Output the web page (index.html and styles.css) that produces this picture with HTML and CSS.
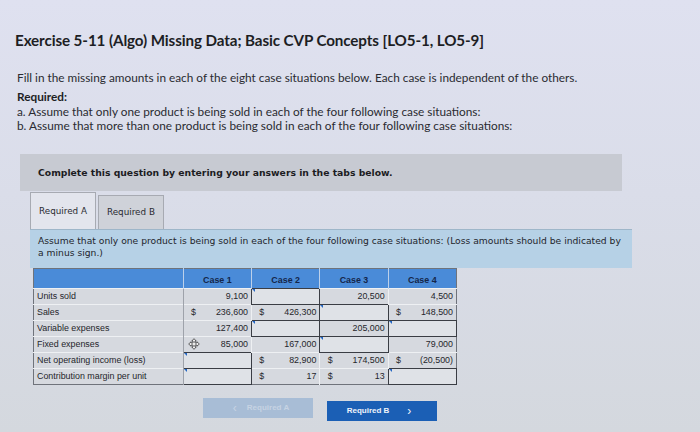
FILE: index.html
```html
<!DOCTYPE html>
<html>
<head>
<meta charset="utf-8">
<title>Exercise 5-11</title>
<link rel="stylesheet" href="styles.css">
</head>
<body>
<div class="page">
  <h1 class="title">Exercise 5-11 (Algo) Missing Data; Basic CVP Concepts [LO5-1, LO5-9]</h1>
  <p class="intro">Fill in the missing amounts in each of the eight case situations below. Each case is independent of the others.</p>
  <div class="req">
    <div class="req-head">Required:</div>
    <div>a. Assume that only one product is being sold in each of the four following case situations:</div>
    <div>b. Assume that more than one product is being sold in each of the four following case situations:</div>
  </div>
  <div class="banner">Complete this question by entering your answers in the tabs below.</div>
  <div class="tabs">
    <div class="tab active">Required A</div>
    <div class="tab">Required B</div>
  </div>
  <div class="panel">
    <div class="instr">Assume that only one product is being sold in each of the four following case situations: (Loss amounts should be indicated by a minus sign.)</div>
  </div>
  <table class="grid">
    <colgroup>
      <col class="c-label">
      <col class="c-dol"><col class="c-val">
      <col class="c-dol"><col class="c-val">
      <col class="c-dol"><col class="c-val">
      <col class="c-dol"><col class="c-val">
    </colgroup>
    <thead>
      <tr>
        <th class="h-label"></th>
        <th colspan="2">Case 1</th>
        <th colspan="2">Case 2</th>
        <th colspan="2">Case 3</th>
        <th colspan="2">Case 4</th>
      </tr>
    </thead>
    <tbody>
      <tr>
        <td class="label">Units sold</td>
        <td class="dol"></td><td class="val">9,100</td>
        <td class="input" colspan="2"></td>
        <td class="dol"></td><td class="val">20,500</td>
        <td class="dol"></td><td class="val">4,500</td>
      </tr>
      <tr>
        <td class="label">Sales</td>
        <td class="dol">$</td><td class="val">236,600</td>
        <td class="dol">$</td><td class="val">426,300</td>
        <td class="input" colspan="2"></td>
        <td class="dol">$</td><td class="val">148,500</td>
      </tr>
      <tr>
        <td class="label">Variable expenses</td>
        <td class="dol"></td><td class="val">127,400</td>
        <td class="input" colspan="2"></td>
        <td class="dol"></td><td class="val">205,000</td>
        <td class="input" colspan="2"></td>
      </tr>
      <tr>
        <td class="label">Fixed expenses</td>
        <td class="dol"><svg class="cursor" viewBox="0 0 14 14" width="12" height="12"><path d="M7 0.8 L9.6 3.6 H8.1 V5.9 H10.4 V4.4 L13.2 7 L10.4 9.6 V8.1 H8.1 V10.4 H9.6 L7 13.2 L4.4 10.4 H5.9 V8.1 H3.6 V9.6 L0.8 7 L3.6 4.4 V5.9 H5.9 V3.6 H4.4 Z" fill="#f4f4f4" stroke="#333" stroke-width="0.9" stroke-linejoin="round"/></svg></td><td class="val">85,000</td>
        <td class="dol"></td><td class="val">167,000</td>
        <td class="input" colspan="2"></td>
        <td class="dol"></td><td class="val">79,000</td>
      </tr>
      <tr>
        <td class="label">Net operating income (loss)</td>
        <td class="input" colspan="2"></td>
        <td class="dol">$</td><td class="val">82,900</td>
        <td class="dol">$</td><td class="val">174,500</td>
        <td class="dol">$</td><td class="val">(20,500)</td>
      </tr>
      <tr>
        <td class="label">Contribution margin per unit</td>
        <td class="input" colspan="2"></td>
        <td class="dol">$</td><td class="val">17</td>
        <td class="dol">$</td><td class="val">13</td>
        <td class="input" colspan="2"></td>
      </tr>
    </tbody>
  </table>
  <div class="nav">
    <div class="btn btn-prev"><span class="chev">&lsaquo;</span> Required A</div>
    <div class="btn btn-next">Required B <span class="chev">&rsaquo;</span></div>
  </div>
</div>
</body>
</html>
```
FILE: styles.css
```css
html, body {
  margin: 0;
  padding: 0;
}
body {
  width: 700px;
  height: 432px;
  overflow: hidden;
  background: linear-gradient(180deg, #dfe1f0 0%, #dadde9 45%, #d4d8de 100%);
  font-family: Lato, "Open Sans", sans-serif;
  color: #1f2026;
}
.page {
  padding: 30px 0 0 15px;
}
.title {
  margin: 0;
  font-family: Lato, sans-serif;
  font-weight: 700;
  font-size: 15.2px;
  line-height: 20px;
  color: #1d1e24;
  letter-spacing: -0.1px;
}
.intro {
  margin: 21px 0 0 2px;
  font-size: 11.8px;
  line-height: 14px;
  color: #2a2b31;
}
.req {
  margin: 5px 0 0 2px;
  font-size: 11.8px;
  line-height: 14.5px;
  color: #2a2b31;
}
.req-head {
  font-weight: 700;
  color: #1d1e24;
}
.banner {
  margin: 20px 0 0 5px;
  width: 602px;
  height: 37px;
  padding-left: 18px;
  box-sizing: border-box;
  display: flex;
  align-items: center;
  background: #c7cad2;
  font-family: "DejaVu Sans", Verdana, sans-serif;
  font-weight: 700;
  font-size: 9.25px;
  color: #1c1c22;
}
.tabs {
  display: flex;
  align-items: flex-end;
  gap: 2px;
  margin: 1px 0 0 15px;
}
.tab {
  height: 34px;
  padding: 0 8px;
  box-sizing: border-box;
  display: flex;
  align-items: center;
  white-space: nowrap;
  border: 1px solid #a7aab2;
  border-bottom: none;
  background: #cfd2d9;
  font-family: "DejaVu Sans", Verdana, sans-serif;
  font-size: 8.8px;
  color: #2a2b31;
}
.tab.active {
  height: 37px;
  background: #e3e5ed;
}
.panel {
  margin-left: 15px;
  width: 602px;
  height: 39px;
  box-sizing: border-box;
  padding: 5px 6px 0 8px;
  background: #b6d1e6;
  border-top: 1px solid #9eb6c9;
}
.instr {
  font-family: "DejaVu Sans", Verdana, sans-serif;
  font-size: 9.2px;
  line-height: 12px;
  color: #23252c;
  width: 584px;
}
.grid {
  margin-left: 18px;
  border-collapse: collapse;
  table-layout: fixed;
  width: 424px;
  font-family: "Liberation Sans", Arial, sans-serif;
  font-size: 8.9px;
  color: #25262b;
  border: 1px solid #6f737b;
}
.c-label { width: 149px; }
.c-dol { width: 20px; }
.c-val { width: 48px; }
.grid th {
  height: 20px;
  padding: 4px 0 0;
  box-sizing: border-box;
  background: #4a8bd8;
  color: #14264a;
  font-weight: 700;
  font-size: 8.9px;
  text-align: center;
  border-left: 1px solid #bcd0ea;
}
.grid th.h-label {
  border-left: none;
}
.grid td {
  height: 16px;
  padding: 0;
  box-sizing: border-box;
  background: #d6d9df;
  border-top: 1px solid #eef0f3;
  white-space: nowrap;
}
.grid td.label {
  padding-left: 3px;
  border-right: 1px solid #9ea2aa;
}
.grid td.dol {
  text-align: center;
  border-left: 1px solid #eef0f3;
}
.grid td.val {
  text-align: right;
  padding-right: 3px;
}
.grid td.input {
  position: relative;
  background: #dfe2e7;
  border: 1px solid #3a3d44;
}
.grid td.input::before {
  content: "";
  position: absolute;
  left: 0;
  top: 0;
  border-style: solid;
  border-width: 3px 0 0 3px;
  border-color: #2467c4 transparent transparent transparent;
}
.cursor {
  display: block;
  margin: 0 auto;
}
.nav {
  display: flex;
  gap: 14px;
  margin-top: 13px;
  padding-left: 188px;
}
.btn {
  width: 110px;
  height: 20px;
  display: flex;
  align-items: center;
  justify-content: center;
  gap: 4px;
  font-family: "Liberation Sans", Arial, sans-serif;
  font-weight: 700;
  font-size: 8px;
}
.btn-prev {
  background: #a8bdd6;
  color: #c6d3e3;
}
.btn-next {
  margin-top: 3px;
  background: #1b5fb5;
  color: #eef3fb;
}
.chev {
  font-size: 12px;
  line-height: 1;
  font-weight: 400;
  margin: 0 6px;
}
.btn-next .chev {
  margin-left: 14px;
}
```
